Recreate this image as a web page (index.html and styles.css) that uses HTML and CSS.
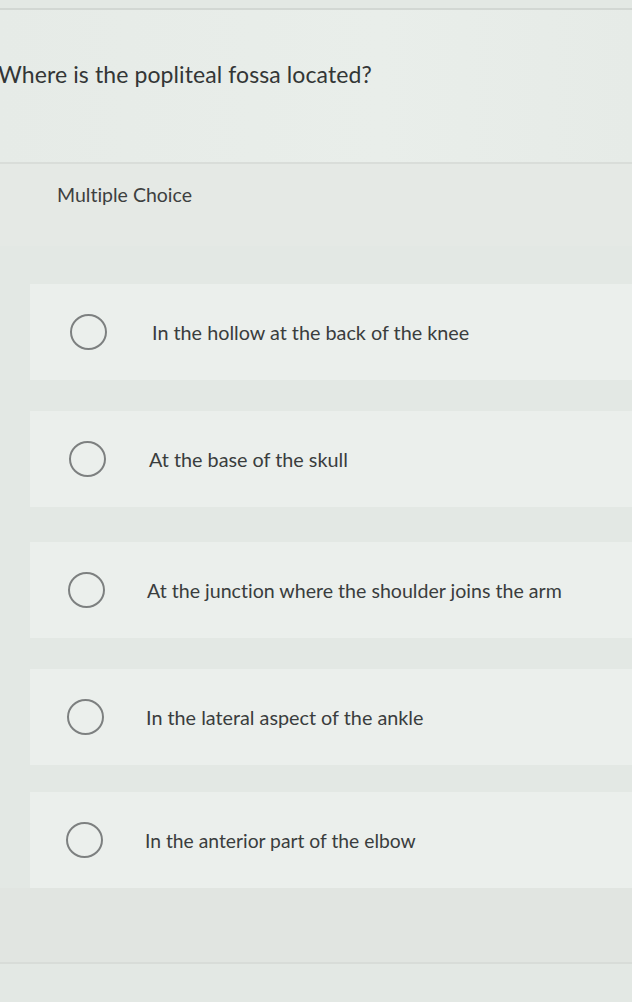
FILE: index.html
```html
<!DOCTYPE html>
<html lang="en">
<head>
<meta charset="utf-8">
<title>Question</title>
<link rel="stylesheet" href="styles.css">
</head>
<body>
  <div class="page">
    <header class="question">
      <h1 class="prompt">Where is the popliteal fossa located?</h1>
    </header>
    <div class="type-band">
      <span class="type-label">Multiple Choice</span>
    </div>
    <ul class="options">
      <li class="option"><span class="radio"></span><span class="option-text">In the hollow at the back of the knee</span></li>
      <li class="option"><span class="radio"></span><span class="option-text">At the base of the skull</span></li>
      <li class="option"><span class="radio"></span><span class="option-text">At the junction where the shoulder joins the arm</span></li>
      <li class="option"><span class="radio"></span><span class="option-text">In the lateral aspect of the ankle</span></li>
      <li class="option"><span class="radio"></span><span class="option-text">In the anterior part of the elbow</span></li>
    </ul>
    <div class="footer-band"></div>
  </div>
</body>
</html>
```

FILE: styles.css
```css
html, body {
  margin: 0;
  padding: 0;
}

body {
  background: #e3e8e4;
  font-family: Lato, "Open Sans", "Liberation Sans", sans-serif;
  font-variant-ligatures: no-common-ligatures;
  color: #3b3e3e;
  width: 632px;
  height: 1002px;
  overflow: hidden;
}

.page {
  display: flex;
  flex-direction: column;
}

.question {
  height: 154px;
  box-sizing: border-box;
  border-top: 2px solid #d2d7d3;
  margin-top: 8px;
  padding-top: 49px;
  background: linear-gradient(90deg, #e6ebe7 0%, #e9eeea 60%, #e6ebe7 100%);
}

.prompt {
  margin: 0 0 0 -2px;
  font-size: 23px;
  line-height: 30px;
  font-weight: 400;
  color: #333636;
  letter-spacing: 0.1px;
}

.type-band {
  height: 84px;
  box-sizing: border-box;
  border-top: 2px solid #d9ddd9;
  padding: 19px 0 0 57px;
  background: #e5e9e5;
}

.type-label {
  font-size: 19.5px;
  line-height: 24px;
  color: #3d4040;
}

.options {
  list-style: none;
  margin: 0;
  padding: 38px 0 0 0;
  display: flex;
  flex-direction: column;
  gap: 31px;
}

.option {
  margin-left: 30px;
  height: 96px;
  display: flex;
  align-items: center;
  padding-left: 40px;
  background: #ebefec;
}

.radio {
  width: 33px;
  height: 32px;
  border: 2px solid #7d8080;
  border-radius: 50%;
  flex: none;
}

.option-text {
  margin-left: 45px;
  font-size: 19.8px;
  color: #3a3d3d;
}

.option:nth-child(2) .radio { margin-left: -1px; }
.option:nth-child(2) .option-text { margin-left: 43px; }
.option:nth-child(3) { margin-top: 4px; }
.option:nth-child(3) .radio { margin-left: -2px; }
.option:nth-child(3) .option-text { margin-left: 42px; font-size: 19.6px; }
.option:nth-child(4) .radio { margin-left: -3px; }
.option:nth-child(4) .option-text { margin-left: 42px; }
.option:nth-child(5) { margin-top: -4px; }
.option:nth-child(5) .radio { margin-left: -4px; }
.option:nth-child(5) .option-text { margin-left: 42px; font-size: 19.3px; }

.footer-band {
  height: 74px;
  background: #e1e5e1;
  border-bottom: 2px solid #d8dcd8;
}
```
